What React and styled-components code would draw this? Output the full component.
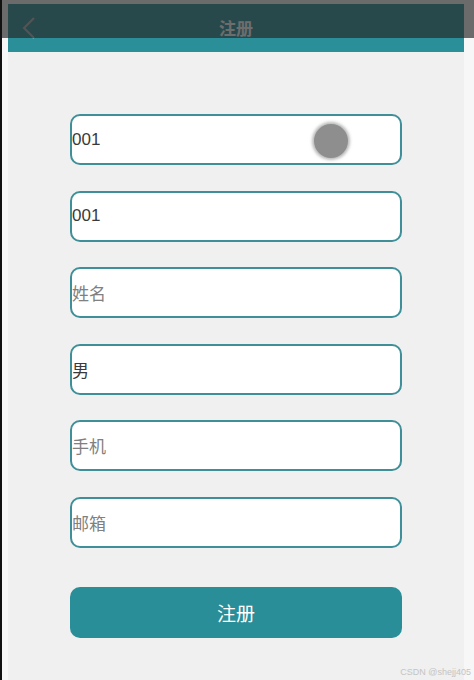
import styled, { createGlobalStyle } from "styled-components"

const GlobalStyle = createGlobalStyle`
  html, body {
    margin: 0;
    padding: 0;
    background: #f7f7f7;
    font-family: "Noto Sans CJK SC", "Liberation Sans", sans-serif;
  }
`

const Screen = styled.div`
  width: 474px;
  height: 680px;
  position: relative;
  overflow: hidden;
  background: #f7f7f7;
  border-left: 2px solid #111;
  box-sizing: border-box;
`

const Dim = styled.div`
  position: absolute;
  left: 0;
  top: 0;
  right: 0;
  height: 38px;
  background: rgba(40, 40, 40, 0.68);
  pointer-events: none;
`

const Phone = styled.div`
  margin: 4px 10px 0 6px;
  height: 676px;
  background: #f0f0f0;
  display: flex;
  flex-direction: column;
`

const Header = styled.div`
  height: 48px;
  background: #2b8f9a;
  position: relative;
  display: flex;
  justify-content: center;
  padding-top: 12px;
  box-sizing: border-box;
`

const Back = styled.svg`
  position: absolute;
  left: 14px;
  top: 12px;
`

const Title = styled.div`
  font-size: 17px;
  font-weight: bold;
  color: #fff;
  line-height: 24px;
`

const Form = styled.div`
  display: flex;
  flex-direction: column;
  align-items: center;
  padding-top: 62px;
  gap: 25.6px;
`

const Field = styled.div`
  width: 332px;
  height: 51px;
  box-sizing: border-box;
  border: 2px solid #3f8f98;
  border-radius: 10px;
  background: #fff;
  display: flex;
  align-items: center;
  position: relative;
  font-family: "Liberation Sans", "Noto Sans CJK SC", sans-serif;
  font-size: 17px;
  color: ${p => (p.$placeholder ? "#808080" : "#3a3a3a")};
`

const Touch = styled.div`
  position: absolute;
  left: 242px;
  top: 8px;
  width: 34px;
  height: 34px;
  border-radius: 50%;
  background: #8e8e8e;
  box-shadow: 0 0 3px 2px rgba(140, 140, 140, 0.6);
`

const Submit = styled.div`
  width: 332px;
  height: 51px;
  margin-top: 13px;
  border-radius: 10px;
  background: #2a8e99;
  color: #fff;
  font-size: 19px;
  display: flex;
  align-items: center;
  justify-content: center;
`

const Mark = styled.div`
  position: absolute;
  right: 3px;
  bottom: 3px;
  font-family: "Liberation Sans", sans-serif;
  font-size: 9px;
  color: #c4c4c4;
`

const fields = [
  { text: "001", touch: true },
  { text: "001" },
  { text: "姓名", placeholder: true },
  { text: "男" },
  { text: "手机", placeholder: true },
  { text: "邮箱", placeholder: true },
]

const App = () => {
  return (
    <Screen>
      <GlobalStyle />
      <Phone>
        <Header>
          <Back width="14" height="24" viewBox="0 0 14 24">
            <path d="M12 2 L2 12 L12 22" fill="none" stroke="#b0b0b0" strokeWidth="2" />
          </Back>
          <Title>注册</Title>
        </Header>
        <Form>
          {fields.map((f, i) => (
            <Field key={i} $placeholder={f.placeholder}>
              {f.text}
              {f.touch && <Touch />}
            </Field>
          ))}
          <Submit>注册</Submit>
        </Form>
      </Phone>
      <Dim />
      <Mark>CSDN @shejj405</Mark>
    </Screen>
  )
}

export default App
